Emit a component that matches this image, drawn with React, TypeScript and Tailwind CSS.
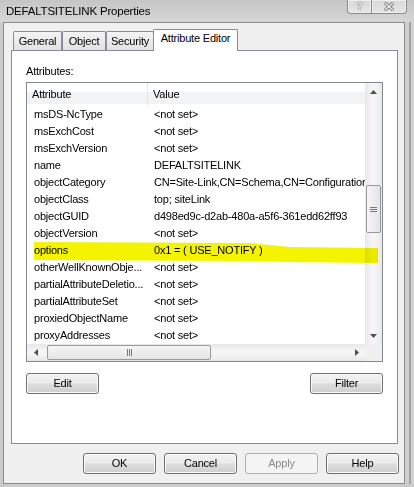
import React from "react";

const rows: [string, string][] = [
  ["msDS-NcType", "<not set>"],
  ["msExchCost", "<not set>"],
  ["msExchVersion", "<not set>"],
  ["name", "DEFALTSITELINK"],
  ["objectCategory", "CN=Site-Link,CN=Schema,CN=Configuration,DC=contoso,DC=com"],
  ["objectClass", "top; siteLink"],
  ["objectGUID", "d498ed9c-d2ab-480a-a5f6-361edd62ff93"],
  ["objectVersion", "<not set>"],
  ["options", "0x1 = ( USE_NOTIFY )"],
  ["otherWellKnownObje...", "<not set>"],
  ["partialAttributeDeletio...", "<not set>"],
  ["partialAttributeSet", "<not set>"],
  ["proxiedObjectName", "<not set>"],
  ["proxyAddresses", "<not set>"],
];

function Btn({ label, disabled }: { label: string; disabled?: boolean }) {
  return (
    <div
      className={
        disabled
          ? "w-[73px] h-[21px] rounded-[3px] border border-[#adb2b5] bg-[#f4f4f4] text-[#8a8a8a] flex items-center justify-center text-[11px]"
          : "w-[73px] h-[21px] rounded-[3px] border border-[#707070] bg-[linear-gradient(to_bottom,#f2f2f2_0%,#ebebeb_48%,#dddddd_52%,#cfcfcf_100%)] shadow-[inset_0_0_0_1px_#fbfbfb] text-black flex items-center justify-center text-[11px]"
      }
    >
      {label}
    </div>
  );
}

function Tab({ label, w, selected }: { label: string; w: string; selected?: boolean }) {
  return (
    <div
      className={
        selected
          ? "h-[22px] -mb-px relative z-10 border border-b-0 border-[#898c95] rounded-t-[2px] bg-white flex justify-center pt-[2px] -ml-px " + w
          : "h-[19px] border border-b-0 border-[#898c95] rounded-t-[2px] bg-[linear-gradient(to_bottom,#f4f4f4,#e2e2e2)] flex justify-center pt-[3px] " + w
      }
    >
      <span className="leading-[13px]">{label}</span>
    </div>
  );
}

function Tri({ dir }: { dir: "up" | "down" | "left" | "right" }) {
  const pts =
    dir === "up"
      ? "0,4 7,4 3.5,0"
      : dir === "down"
      ? "0,0 7,0 3.5,4"
      : dir === "left"
      ? "4,0 4,7 0,3.5"
      : "0,0 0,7 4,3.5";
  const w = dir === "up" || dir === "down" ? 7 : 4;
  const h = dir === "up" || dir === "down" ? 4 : 7;
  return (
    <svg width={w} height={h} viewBox={`0 0 ${w} ${h}`}>
      <polygon points={pts} fill="#505050" />
    </svg>
  );
}

export default function App() {
  return (
    <div className="w-[414px] h-[487px] relative overflow-hidden flex flex-col bg-[#cbcbcb] text-black font-['Liberation_Sans',Arial,sans-serif] text-[11px] tracking-[-0.2px] select-none">
      {/* Title bar */}
      <div className="h-[22px] flex items-start pl-[6px] pr-[7px] bg-[linear-gradient(to_bottom,#c6c6c6,#d6d6d6)]">
        <div className="mt-[4px] text-[11.5px] tracking-[-0.2px] leading-[14px] text-black">DEFALTSITELINK Properties</div>
        <div className="ml-auto flex">
          <div className="w-[25px] h-[14px] border border-t-0 border-[#8a8a8a] rounded-bl-[4px] bg-[linear-gradient(to_bottom,#d9d9d9,#e6e6e6)] flex items-center justify-center shadow-[inset_0_0_0_1px_#eeeeee]">
            <span className="text-[11px] font-bold leading-[11px] text-[#f4f4f4] [text-shadow:0_0_1px_#555,0_0_1px_#555]">?</span>
          </div>
          <div className="w-[35px] h-[14px] border border-t-0 border-l-0 border-[#8a8a8a] rounded-br-[4px] bg-[linear-gradient(to_bottom,#d9d9d9,#e6e6e6)] flex items-center justify-center shadow-[inset_0_0_0_1px_#eeeeee]">
            <svg width="10" height="9" viewBox="0 0 10 9">
              <path d="M1 1 L9 8 M9 1 L1 8" stroke="#6a6a6a" strokeWidth="3" strokeLinecap="square" />
              <path d="M1 1 L9 8 M9 1 L1 8" stroke="#f4f4f4" strokeWidth="1.4" strokeLinecap="square" />
            </svg>
          </div>
        </div>
      </div>

      {/* Middle */}
      <div className="flex-1 flex pl-[3px]">
        {/* Client area */}
        <div className="w-[402px] h-[462px] border border-[#8a8a8a] bg-[#f0f0f0] flex flex-col">
          {/* Tab strip */}
          <div className="h-[27px] flex items-end ml-[7px] mr-[6px] pl-[2px]">
            <Tab label="General" w="w-[49px]" />
            <Tab label="Object" w="w-[44px]" />
            <Tab label="Security" w="w-[48px]" />
            <Tab label="Attribute Editor" w="w-[85px]" selected />
          </div>
          {/* Panel */}
          <div className="h-[394px] ml-[7px] mr-[6px] border border-[#898c95] bg-white flex flex-col px-[14px] pt-[14px]">
            <div className="leading-[13px] h-[13px]">Attributes:</div>
            <div className="mt-[4px] h-[280px] border border-[#828790] bg-white flex flex-col">
              <div className="flex-1 flex min-h-0">
                <div className="flex-1 min-w-0 overflow-hidden flex flex-col">
                  <div className="h-[23px] shrink-0 flex bg-[linear-gradient(to_bottom,#ffffff_0%,#ffffff_40%,#f2f3f5_40%,#f2f3f5_92%,#ffffff_92%)]">
                    <div className="w-[121px] shrink-0 pl-[5px] flex items-center border-r border-[#e3e4e6]">Attribute</div>
                    <div className="w-[220px] shrink-0 pl-[5px] flex items-center border-r border-[#e3e4e6]">Value</div>
                  </div>
                  {rows.map(([a, v]) => (
                    <div key={a} className="h-[17px] shrink-0 flex items-center whitespace-nowrap">
                      <div className="w-[121px] shrink-0 pl-[7px] overflow-hidden">{a}</div>
                      <div className="shrink-0 pl-[6px]">{v}</div>
                    </div>
                  ))}
                </div>
                {/* Vertical scrollbar */}
                <div className="w-[17px] shrink-0 flex flex-col bg-[linear-gradient(to_right,#e8e8e8,#f5f5f5_40%,#f5f5f5_60%,#e8e8e8)]">
                  <div className="h-[17px] shrink-0 flex items-center justify-center">
                    <Tri dir="up" />
                  </div>
                  <div className="flex-1 px-[1px]">
                    <div className="mt-[85px] h-[48px] rounded-[2px] border border-[#9a9a9a] bg-[linear-gradient(to_right,#f6f6f6,#e4e4e4)] flex flex-col items-center justify-center gap-[1px]">
                      <div className="w-[7px] h-[1px] bg-[#7a7a7a]" />
                      <div className="w-[7px] h-[1px] bg-[#7a7a7a]" />
                      <div className="w-[7px] h-[1px] bg-[#7a7a7a]" />
                    </div>
                  </div>
                  <div className="h-[17px] shrink-0 flex items-center justify-center">
                    <Tri dir="down" />
                  </div>
                </div>
              </div>
              {/* Horizontal scrollbar */}
              <div className="h-[17px] shrink-0 flex">
                <div className="flex-1 flex items-center bg-[linear-gradient(to_bottom,#e8e8e8,#f5f5f5_40%,#f5f5f5_60%,#e8e8e8)]">
                  <div className="w-[17px] h-[17px] shrink-0 flex items-center justify-center">
                    <Tri dir="left" />
                  </div>
                  <div className="ml-[3px] w-[164px] h-[15px] rounded-[2px] border border-[#9a9a9a] bg-[linear-gradient(to_bottom,#f6f6f6,#e4e4e4)] flex items-center justify-center gap-[1px]">
                    <div className="w-[1px] h-[7px] bg-[#7a7a7a]" />
                    <div className="w-[1px] h-[7px] bg-[#7a7a7a]" />
                    <div className="w-[1px] h-[7px] bg-[#7a7a7a]" />
                  </div>
                  <div className="ml-auto w-[17px] h-[17px] shrink-0 flex items-center justify-center">
                    <Tri dir="right" />
                  </div>
                </div>
                <div className="w-[17px] shrink-0 bg-[#f0f0f0]" />
              </div>
            </div>
            <div className="mt-[11px] flex justify-between">
              <Btn label="Edit" />
              <Btn label="Filter" />
            </div>
          </div>
          {/* Bottom buttons */}
          <div className="mt-[9px] flex justify-end gap-[8px] mr-[5px]">
            <Btn label="OK" />
            <Btn label="Cancel" />
            <Btn label="Apply" disabled />
            <Btn label="Help" />
          </div>
        </div>
        {/* Right frame */}
        <div className="flex-1 bg-[linear-gradient(to_right,#cfcfcf_0,#cfcfcf_4px,#a3a3a3_4px,#a3a3a3_6px,#d2d2d2_6px)]" />
      </div>
      <div className="h-[3px] shrink-0" />

      {/* Yellow highlighter stroke */}
      <svg className="absolute left-0 top-0 pointer-events-none" width="414" height="487" viewBox="0 0 414 487">
        <polygon
          points="34,242 250,243 290,247 378,248 378,263 290,262 250,261 34,260"
          fill="#f4f400"
          style={{ mixBlendMode: "multiply" }}
        />
      </svg>
    </div>
  );
}
